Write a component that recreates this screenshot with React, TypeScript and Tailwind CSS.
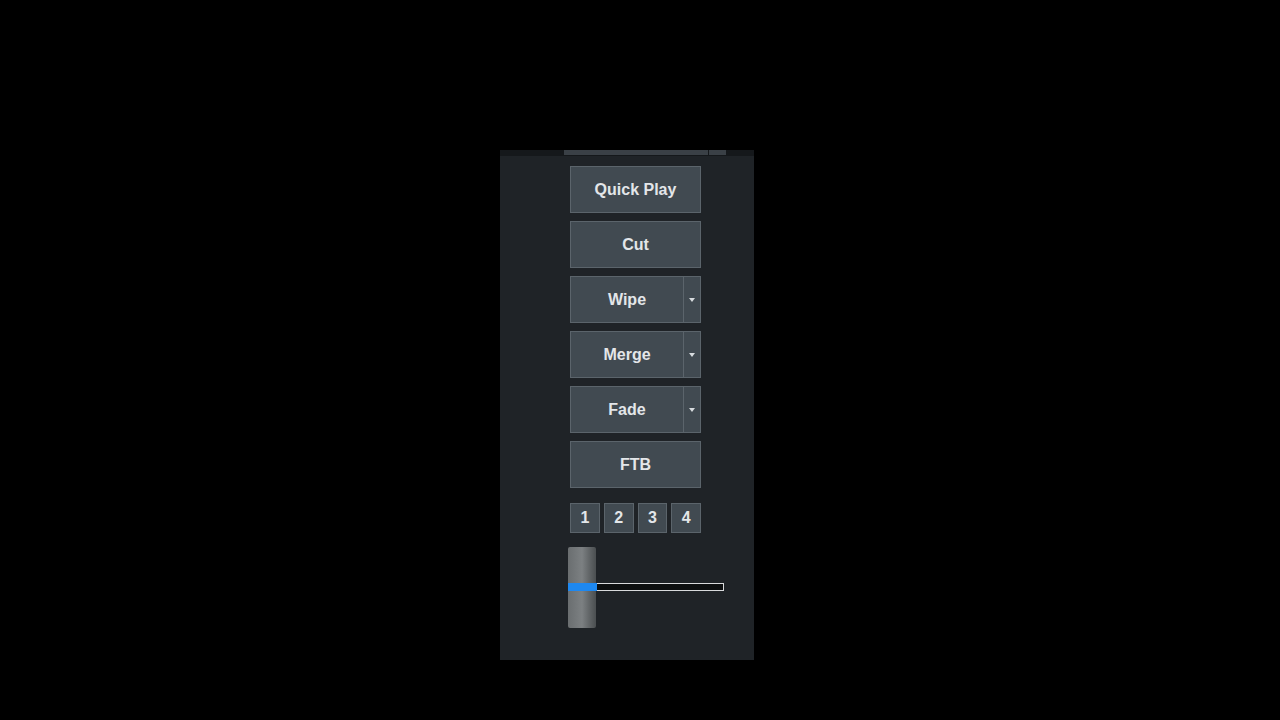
import React from "react";

const transitions = [
  { label: "Quick Play", menu: false },
  { label: "Cut", menu: false },
  { label: "Wipe", menu: true },
  { label: "Merge", menu: true },
  { label: "Fade", menu: true },
  { label: "FTB", menu: false },
];

export default function App() {
  return (
    <div
      className="w-[1280px] h-[720px] bg-black flex justify-center"
      style={{ fontFamily: '"Liberation Sans", Arial, sans-serif' }}
    >
      <div className="ml-[-26px] mt-[150px] w-[254px] h-[510px] bg-[#1f2327] flex flex-col">
        {/* top strip */}
        <div className="h-[6px] bg-[#15181b] flex">
          <div className="ml-[64px] w-[144px] h-[5px] bg-[#3a4046]" />
          <div className="ml-[1px] w-[17px] h-[5px] bg-[#3a4046]" />
        </div>

        <div className="ml-[70px] w-[131px] mt-[10px] flex flex-col gap-[8px]">
          {transitions.map((t) => (
            <div
              key={t.label}
              className="h-[47px] bg-[#414a51] border border-[#5b646b] flex text-[#e3e6e9] text-[16px] font-bold"
            >
              <div className="flex-1 flex items-center justify-center">{t.label}</div>
              {t.menu && (
                <div className="w-[17px] border-l border-[#5b646b] flex items-center justify-center">
                  <svg width="6" height="4" viewBox="0 0 6 4">
                    <path d="M0 0h6L3 4z" fill="#d8dcdf" />
                  </svg>
                </div>
              )}
            </div>
          ))}

          <div className="mt-[7px] flex gap-[4px]">
            {["1", "2", "3", "4"].map((n) => (
              <div
                key={n}
                className="w-[30px] h-[30px] bg-[#414a51] border border-[#5b646b] flex items-center justify-center text-[#e3e6e9] text-[16px] font-bold"
              >
                {n}
              </div>
            ))}
          </div>
        </div>

        {/* T-bar slider */}
        <div className="ml-[68px] mt-[14px] flex items-center relative w-[156px] h-[81px]">
          <div className="w-[28px] h-[81px] rounded-[2px] bg-gradient-to-r from-[#6a6e70] via-[#7c8082] to-[#4a4e50]" />
          <div className="w-[128px] h-[8px] mb-[2px] border border-[#d8dadc] bg-[#0d0f10]" />
          <div className="absolute left-0 top-[36px] w-[29px] h-[8px] bg-[#1e88f0]" />
        </div>
      </div>
    </div>
  );
}
